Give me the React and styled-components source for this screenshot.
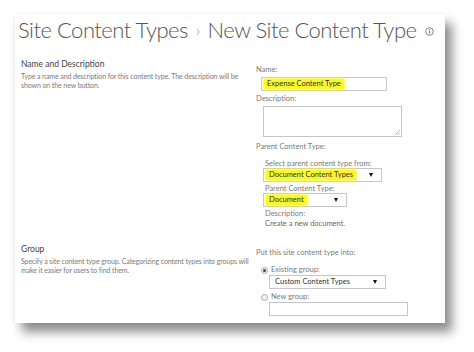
import React from 'react'
import styled, { createGlobalStyle } from 'styled-components'

const Global = createGlobalStyle`
  html, body { margin: 0; padding: 0; background: #fff; }
  body { font-family: Lato, "Open Sans", sans-serif; }
`

const Page = styled.div`
  width: 474px;
  height: 352px;
  padding: 14px 0 0 15px;
  box-sizing: border-box;
  overflow: hidden;
`

const Card = styled.div`
  width: 430px;
  height: 309px;
  background: #fff;
  box-sizing: border-box;
  padding: 1px 0 0 3px;
  box-shadow: 7px 9px 10px rgba(0,0,0,0.45), -1px 0 4px rgba(0,0,0,0.06);
`

const Title = styled.h1`
  margin: 0;
  display: flex;
  align-items: center;
  font-weight: 300;
  font-size: 22px;
  letter-spacing: -0.5px;
  line-height: 30px;
  color: #555;
  white-space: nowrap;
`

const Sep = styled.span`
  font-size: 15px;
  margin: 0 8px;
  color: #888;
`

const Info = styled.svg`
  margin-left: 8px;
  margin-top: 2px;
`

const Section = styled.div`
  display: grid;
  grid-template-columns: 238px 1fr;
  margin-top: ${({top}) => top}px;
`

const Left = styled.div`
  padding-left: 3px;
`

const Heading = styled.div`
  font-size: 8.5px;
  line-height: 12px;
  color: #444;
`

const Help = styled.div`
  font-size: 7px;
  letter-spacing: -0.1px;
  line-height: 9px;
  color: #7a7a7a;
  margin-top: 2px;
  width: 230px;
`

const Right = styled.div`
  display: flex;
  flex-direction: column;
`

const Label = styled.div`
  font-size: 7.5px;
  line-height: 10px;
  color: #7a7a7a;
  margin-left: ${({indent}) => indent || 0}px;
  margin-top: ${({mt}) => mt || 0}px;
`

const Value = styled.div`
  font-size: 7.5px;
  line-height: 10px;
  color: #666;
  margin-left: 9px;
`

const Box = styled.div`
  position: relative;
  box-sizing: border-box;
  width: ${({w}) => w}px;
  height: ${({h}) => h}px;
  border: 1px solid #c6c6c6;
  background: #fff;
  margin-left: ${({indent}) => indent || 0}px;
  margin-top: ${({mt}) => mt || 0}px;
  display: flex;
  align-items: center;
  padding-left: 2px;
`

const Mark = styled.span`
  font-size: 7.5px;
  line-height: 10px;
  color: #333;
  padding: 0 3px;
  background: ${({hl}) => hl ? '#fbf72e' : 'transparent'};
  box-shadow: ${({hl}) => hl ? '0 0 3px 1px #fbf72e' : 'none'};
  border-radius: 2px;
`

const Arrow = styled.span`
  position: absolute;
  right: 8px;
  top: 4px;
  width: 0;
  height: 0;
  border-left: 2.5px solid transparent;
  border-right: 2.5px solid transparent;
  border-top: 4px solid #111;
`

const Grip = styled.svg`
  position: absolute;
  right: 1px;
  bottom: 1px;
`

const RadioRow = styled.div`
  display: flex;
  align-items: center;
  gap: 3px;
  margin-left: 5px;
  margin-top: ${({mt}) => mt || 0}px;
`

const Radio = styled.span`
  width: 7px;
  height: 7px;
  box-sizing: border-box;
  border-radius: 50%;
  border: 1px solid #aaa;
  background: #f2f2f2;
  display: flex;
  align-items: center;
  justify-content: center;
  &::after {
    content: "";
    width: 3px;
    height: 3px;
    border-radius: 50%;
    background: ${({on}) => on ? '#444' : 'transparent'};
  }
`

const Select = ({w, indent, mt, hl, children}) => (
  <Box w={w} h={14} indent={indent} mt={mt}>
    <Mark hl={hl}>{children}</Mark>
    <Arrow />
  </Box>
)

export default function App() {
  return (
    <Page>
      <Global />
      <Card>
        <Title>
          Site Content Types<Sep>›</Sep>New Site Content Type
          <Info width="9" height="9" viewBox="0 0 10 10">
            <circle cx="5" cy="5" r="4.2" fill="none" stroke="#777" strokeWidth="1" />
            <rect x="4.4" y="4.2" width="1.2" height="3" fill="#777" />
            <rect x="4.4" y="2.6" width="1.2" height="1" fill="#777" />
          </Info>
        </Title>

        <Section top={13}>
          <Left>
            <Heading>Name and Description</Heading>
            <Help>Type a name and description for this content type. The description will be shown on the new button.</Help>
          </Left>
          <Right>
            <Label mt={7}>Name:</Label>
            <Box w={126} h={14} indent={5} mt={2}>
              <Mark hl>Expense Content Type</Mark>
            </Box>
            <Label mt={3}>Description:</Label>
            <Box w={139} h={31} indent={7} mt={2}>
              <Grip width="5" height="5" viewBox="0 0 5 5">
                <path d="M5 0L0 5M5 2.5L2.5 5" stroke="#999" strokeWidth="0.7" />
              </Grip>
            </Box>
            <Label mt={5}>Parent Content Type:</Label>
            <Label indent={9} mt={7}>Select parent content type from:</Label>
            <Select w={119} indent={7} mt={-1} hl>Document Content Types</Select>
            <Label indent={9} mt={2}>Parent Content Type:</Label>
            <Select w={84} indent={7} mt={-1} hl>Document</Select>
            <Label indent={9} mt={2}>Description:</Label>
            <Value>Create a new document.</Value>
          </Right>
        </Section>

        <Section top={14}>
          <Left>
            <Heading>Group</Heading>
            <Help>Specify a site content type group. Categorizing content types into groups will make it easier for users to find them.</Help>
          </Left>
          <Right>
            <Label mt={5}>Put this site content type into:</Label>
            <RadioRow mt={7}>
              <Radio on />
              <Label>Existing group:</Label>
            </RadioRow>
            <Select w={117} indent={13}>Custom Content Types</Select>
            <RadioRow mt={3}>
              <Radio />
              <Label>New group:</Label>
            </RadioRow>
            <Box w={139} h={14} indent={13} mt={0} />
          </Right>
        </Section>
      </Card>
    </Page>
  )
}
